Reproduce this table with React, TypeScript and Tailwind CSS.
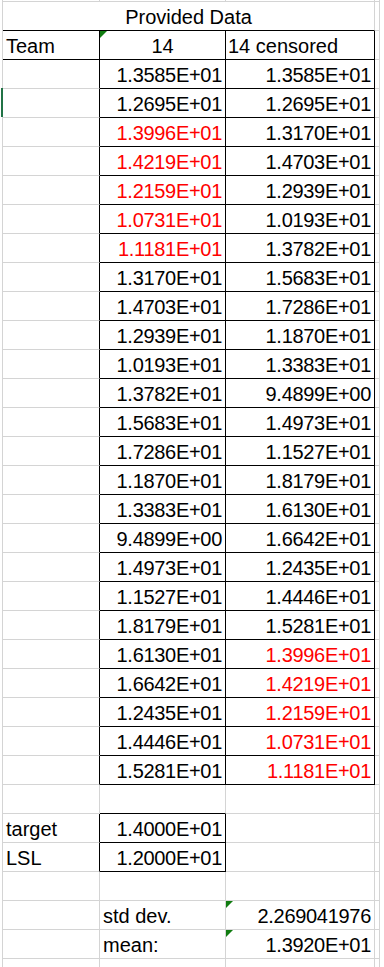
import React from 'react';

type Line = 'g' | 'k' | 'n';

const colB: [string, boolean][] = [
  ['1.3585E+01', false], ['1.2695E+01', false], ['1.3996E+01', true], ['1.4219E+01', true],
  ['1.2159E+01', true], ['1.0731E+01', true], ['1.1181E+01', true], ['1.3170E+01', false],
  ['1.4703E+01', false], ['1.2939E+01', false], ['1.0193E+01', false], ['1.3782E+01', false],
  ['1.5683E+01', false], ['1.7286E+01', false], ['1.1870E+01', false], ['1.3383E+01', false],
  ['9.4899E+00', false], ['1.4973E+01', false], ['1.1527E+01', false], ['1.8179E+01', false],
  ['1.6130E+01', false], ['1.6642E+01', false], ['1.2435E+01', false], ['1.4446E+01', false],
  ['1.5281E+01', false],
];

const colC: [string, boolean][] = [
  ['1.3585E+01', false], ['1.2695E+01', false], ['1.3170E+01', false], ['1.4703E+01', false],
  ['1.2939E+01', false], ['1.0193E+01', false], ['1.3782E+01', false], ['1.5683E+01', false],
  ['1.7286E+01', false], ['1.1870E+01', false], ['1.3383E+01', false], ['9.4899E+00', false],
  ['1.4973E+01', false], ['1.1527E+01', false], ['1.8179E+01', false], ['1.6130E+01', false],
  ['1.6642E+01', false], ['1.2435E+01', false], ['1.4446E+01', false], ['1.5281E+01', false],
  ['1.3996E+01', true], ['1.4219E+01', true], ['1.2159E+01', true], ['1.0731E+01', true],
  ['1.1181E+01', true],
];

const rightCls: Record<Line, string> = {
  g: 'border-r border-r-[#d4d4d4]',
  k: 'border-r border-r-black',
  n: '',
};
const bottomCls: Record<Line, string> = {
  g: 'border-b border-b-[#d4d4d4]',
  k: 'border-b border-b-black',
  n: '',
};

function Cell({
  w,
  r = 'g',
  b = 'g',
  className = '',
  children,
}: {
  w: string;
  r?: Line;
  b?: Line;
  className?: string;
  children?: React.ReactNode;
}) {
  return (
    <div className={`relative h-full shrink-0 overflow-hidden whitespace-nowrap ${w} ${rightCls[r]} ${bottomCls[b]} ${className}`}>
      {children}
    </div>
  );
}

// Excel error indicator in the top-left corner of a cell
function Flag() {
  return (
    <svg className="absolute left-0 top-0" width="7" height="7" viewBox="0 0 7 7">
      <polygon points="0,0 7,0 0,7" fill="#107c10" />
    </svg>
  );
}

const txt = 'pt-[3px] leading-[25px]';
const num = `${txt} pr-[3px] text-right tracking-[-0.3px]`;

function Row({ children, h = 'h-[29px]' }: { children: React.ReactNode; h?: string }) {
  return <div className={`flex ${h}`}>{children}</div>;
}

export default function App() {
  return (
    <div
      className="relative h-[967px] w-[384px] overflow-hidden bg-white text-[20px] text-black"
      style={{ fontFamily: '"Liberation Sans", Arial, sans-serif' }}
    >
      <div className="ml-[2px] border-l border-l-[#d4d4d4]">
        <Row h="h-[2px]">
          <Cell w="w-[97px]" />
          <Cell w="w-[126px]" />
          <Cell w="w-[149px]" />
          <Cell w="w-[5px]" />
        </Row>

        <Row>
          <Cell w="w-[372px]" b="k" className={`${txt} text-center`}>
            Provided Data
          </Cell>
          <Cell w="w-[5px]" />
        </Row>

        <Row>
          <Cell w="w-[97px]" r="k" b="k" className={`${txt} pl-[3px]`}>
            Team
          </Cell>
          <Cell w="w-[126px]" r="k" b="k" className={`${txt} text-center`}>
            <Flag />
            14
          </Cell>
          <Cell w="w-[149px]" r="k" b="k" className={`${txt} pl-[2px]`}>
            14 censored
          </Cell>
          <Cell w="w-[5px]" />
        </Row>

        {colB.map(([bv, bRed], i) => {
          const [cv, cRed] = colC[i];
          return (
            <Row key={i}>
              <Cell w="w-[97px]" r="k" />
              <Cell w="w-[126px]" r="k" b="k" className={`${num} ${bRed ? 'text-[#ff0000]' : ''}`}>
                {bv}
              </Cell>
              <Cell w="w-[149px]" r="k" b="k" className={`${num} ${cRed ? 'text-[#ff0000]' : ''}`}>
                {cv}
              </Cell>
              <Cell w="w-[5px]" />
            </Row>
          );
        })}

        <Row>
          <Cell w="w-[97px]" />
          <Cell w="w-[126px]" b="k" />
          <Cell w="w-[149px]" />
          <Cell w="w-[5px]" />
        </Row>

        <Row>
          <Cell w="w-[97px]" r="k" className={`${txt} pl-[3px]`}>
            target
          </Cell>
          <Cell w="w-[126px]" r="k" b="k" className={num}>
            1.4000E+01
          </Cell>
          <Cell w="w-[149px]" />
          <Cell w="w-[5px]" />
        </Row>

        <Row>
          <Cell w="w-[97px]" r="k" className={`${txt} pl-[3px]`}>
            LSL
          </Cell>
          <Cell w="w-[126px]" r="k" b="k" className={num}>
            1.2000E+01
          </Cell>
          <Cell w="w-[149px]" />
          <Cell w="w-[5px]" />
        </Row>

        <Row>
          <Cell w="w-[97px]" />
          <Cell w="w-[126px]" />
          <Cell w="w-[149px]" />
          <Cell w="w-[5px]" />
        </Row>

        <Row>
          <Cell w="w-[97px]" />
          <Cell w="w-[126px]" className={`${txt} pl-[3px]`}>
            std dev.
          </Cell>
          <Cell w="w-[149px]" className={num}>
            <Flag />
            2.269041976
          </Cell>
          <Cell w="w-[5px]" />
        </Row>

        <Row>
          <Cell w="w-[97px]" />
          <Cell w="w-[126px]" className={`${txt} pl-[3px]`}>
            mean:
          </Cell>
          <Cell w="w-[149px]" className={num}>
            <Flag />
            1.3920E+01
          </Cell>
          <Cell w="w-[5px]" />
        </Row>

        <Row>
          <Cell w="w-[97px]" b="n" />
          <Cell w="w-[126px]" b="n" />
          <Cell w="w-[149px]" b="n" />
          <Cell w="w-[5px]" b="n" />
        </Row>
      </div>

      {/* active cell edge */}
      <div className="absolute left-[1px] top-[88px] h-[29px] w-[2px] bg-[#217346]" />
    </div>
  );
}
